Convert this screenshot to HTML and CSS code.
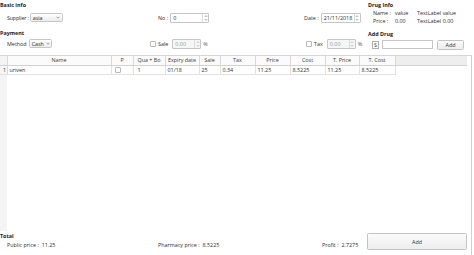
FILE: index.html
```html
<!DOCTYPE html>
<html>
<head>
<meta charset="utf-8">
<link rel="stylesheet" href="styles.css">
</head>
<body>
<div class="top">
  <div class="left">
    <div class="title">Basic info</div>
    <div class="frow r1">
      <div class="fcell c1">
        <span class="lbl tight">Supplier :</span>
        <div class="combo w-sup"><span>asia</span><svg class="chev" width="4" height="3" viewBox="0 0 4 3"><path d="M0.5 0.7 L2 2.2 L3.5 0.7" fill="none" stroke="#666" stroke-width="0.6"/></svg></div>
      </div>
      <div class="fcell c2 off8">
        <span class="lbl">No :</span>
        <div class="spin w-no"><span class="val">0</span><span class="arrows"><svg width="4" height="8" viewBox="0 0 4 8"><path d="M0.8 3 L2 1.6 L3.2 3" fill="none" stroke="#777" stroke-width="0.6"/><path d="M0.8 5 L2 6.4 L3.2 5" fill="none" stroke="#777" stroke-width="0.6"/></svg></span></div>
      </div>
      <div class="fcell c3">
        <span class="lbl">Date :</span>
        <div class="spin w-date"><span class="val">21/11/2018</span><span class="arrows"><svg width="4" height="8" viewBox="0 0 4 8"><path d="M0.8 3 L2 1.6 L3.2 3" fill="none" stroke="#777" stroke-width="0.6"/><path d="M0.8 5 L2 6.4 L3.2 5" fill="none" stroke="#777" stroke-width="0.6"/></svg></span></div>
      </div>
    </div>
    <div class="title t2">Payment</div>
    <div class="frow r2">
      <div class="fcell c1">
        <span class="lbl">Method</span>
        <div class="combo w-cash"><span>Cash</span><svg class="chev" width="4" height="3" viewBox="0 0 4 3"><path d="M0.5 0.7 L2 2.2 L3.5 0.7" fill="none" stroke="#666" stroke-width="0.6"/></svg></div>
      </div>
      <div class="fcell c2">
        <span class="cb"></span><span class="lbl">Sale</span>
        <div class="spin dis w-pct"><span class="val">0.00</span><span class="arrows"><svg width="4" height="8" viewBox="0 0 4 8"><path d="M0.8 3 L2 1.6 L3.2 3" fill="none" stroke="#aaa" stroke-width="0.6"/><path d="M0.8 5 L2 6.4 L3.2 5" fill="none" stroke="#aaa" stroke-width="0.6"/></svg></span></div>
        <span class="pct">%</span>
      </div>
      <div class="fcell c3 off2">
        <span class="cb"></span><span class="lbl">Tax</span>
        <div class="spin dis w-pct"><span class="val">0.00</span><span class="arrows"><svg width="4" height="8" viewBox="0 0 4 8"><path d="M0.8 3 L2 1.6 L3.2 3" fill="none" stroke="#aaa" stroke-width="0.6"/><path d="M0.8 5 L2 6.4 L3.2 5" fill="none" stroke="#aaa" stroke-width="0.6"/></svg></span></div>
        <span class="pct">%</span>
      </div>
    </div>
  </div>
  <div class="right">
    <div class="title rt">Drug Info</div>
    <div class="info">
      <span>Name :</span><span>value</span><span>TextLabel value</span>
      <span>Price :</span><span>0.00</span><span>TextLabel 0.00</span>
    </div>
    <div class="title rt2">Add Drug</div>
    <div class="addrow">
      <div class="sbox">S</div>
      <div class="edit"></div>
      <div class="btn small">Add</div>
    </div>
  </div>
</div>
<div class="main">
  <div class="grid">
    <table class="tbl">
      <colgroup>
        <col style="width:7px"><col style="width:104px"><col style="width:22px"><col style="width:32px"><col style="width:34px"><col style="width:21px"><col style="width:35px"><col style="width:35px"><col style="width:35px"><col style="width:34px"><col style="width:36px"><col style="width:72px">
      </colgroup>
      <thead>
        <tr>
          <th class="corner"></th><th>Name</th><th>P</th><th>Qua + Bo</th><th>Expiry date</th><th>Sale</th><th>Tax</th><th>Price</th><th>Cost</th><th>T. Price</th><th>T. Cost</th><th class="filler"></th>
        </tr>
      </thead>
      <tbody>
        <tr>
          <td class="vh">1</td><td>uriven</td><td><span class="cb tcb"></span></td><td class="pad4">1</td><td>01/18</td><td>25</td><td>0.34</td><td>11.25</td><td>8.5225</td><td>11.25</td><td>8.5225</td><td class="empty"></td>
        </tr>
      </tbody>
    </table>
    <div class="vstrip"></div>
  </div>
  <div class="footer">
    <div class="fleft">
      <div class="title">Total</div>
      <div class="totals">
        <span>Public price :&nbsp; 11.25</span>
        <span>Pharmacy price :&nbsp; 8.5225</span>
        <span>Profit :&nbsp; 2.7275</span>
      </div>
    </div>
    <div class="btn big">Add</div>
  </div>
</div>
</body>
</html>
```
FILE: styles.css
```css
* { box-sizing: border-box; }
html, body { margin: 0; padding: 0; }
body {
  width: 474px;
  height: 255px;
  overflow: hidden;
  background: #ffffff;
  font-family: "Open Sans", "Noto Sans", sans-serif;
  font-size: 5.4px;
  color: #2e2e2e;
}
.top { display: flex; height: 55px; }
.left { width: 368px; }
.right { width: 106px; }
.title { font-weight: 700; height: 10px; line-height: 10px; color: #222; }
.t2 { margin-top: 5px; }
.frow {
  display: grid;
  grid-template-columns: 143px 154px auto;
  padding-left: 7px;
  height: 11px;
  align-items: center;
}
.r1 { margin-top: 2px; }
.fcell { display: flex; align-items: center; height: 11px; }
.off8 { padding-left: 8px; }
.off2 { padding-left: 2px; }
.lbl { white-space: nowrap; margin-right: 2px; }
.tight { letter-spacing: -0.2px; margin-right: 1px; }
.combo {
  height: 9px;
  border: 1px solid #c6c6c6;
  border-radius: 1.5px;
  background: linear-gradient(#fefefe, #ececec);
  display: flex;
  align-items: center;
  justify-content: space-between;
  padding: 0 2px 0 2px;
}
.w-sup { width: 33px; }
.w-cash { width: 23px; padding-right: 1px; }
.chev { display: block; }
.spin {
  height: 10px;
  border: 1px solid #c6c6c6;
  border-radius: 1px;
  background: #fff;
  display: flex;
  align-items: center;
  justify-content: space-between;
  padding-left: 2px;
}
.spin .arrows {
  width: 6px;
  height: 8px;
  display: flex;
  align-items: center;
  justify-content: center;
  border-left: 1px solid #dcdcdc;
}
.spin.dis { background: #f6f6f6; color: #9a9a9a; }
.w-no { width: 39px; }
.w-date { width: 40px; }
.w-pct { width: 29px; margin-left: 2px; }
.pct { margin-left: 2px; color: #555; }
.cb {
  display: inline-block;
  width: 6px;
  height: 6px;
  border: 1px solid #b8b8b8;
  border-radius: 1px;
  background: #fff;
  margin-right: 2px;
}
.info {
  display: grid;
  grid-template-columns: 22px 22px auto;
  padding-left: 5px;
  line-height: 8px;
  margin-top: -1px;
}
.rt { height: 10px; }
.rt2 { margin-top: 4px; }
.addrow { display: flex; align-items: center; padding-left: 4px; height: 11px; }
.sbox {
  width: 7px; height: 8px;
  border: 1px solid #b0b0b0;
  display: flex; align-items: center; justify-content: center;
  margin-right: 3px;
  background: #fff;
}
.edit { width: 51px; height: 9px; border: 1px solid #c6c6c6; background: #fff; margin-right: 4px; }
.btn {
  border: 1px solid #c2c2c2;
  border-radius: 1.5px;
  background: linear-gradient(#fbfbfb, #ededed);
  display: flex; align-items: center; justify-content: center;
  color: #333;
}
.small { width: 27px; height: 10px; }
.main {
  width: 472px;
  height: 200px;
  border-right: 1px solid #cfcfcf;
  display: flex;
  flex-direction: column;
}
.grid { height: 175px; position: relative; border-top: 1px solid #d6d6d6; }
.tbl {
  border-collapse: collapse;
  table-layout: fixed;
  width: 467px;
}
.tbl th {
  font-weight: 400;
  height: 9px;
  padding: 0;
  background: #fbfbfb;
  border-right: 1px solid #d9d9d9;
  border-bottom: 1px solid #d2d2d2;
  text-align: center;
  white-space: nowrap;
  overflow: hidden;
  color: #3a3a3a;
}
.tbl th.corner { background: #f4f4f4; }
.tbl th.filler { background: #eeeeee; border-right: none; }
.tbl td {
  height: 9px;
  padding: 0 0 0 2px;
  border-right: 1px solid #e2e2e2;
  border-bottom: 1px solid #e2e2e2;
  white-space: nowrap;
  overflow: hidden;
  background: #fff;
}
.tbl td.vh { background: #f6f6f6; padding-left: 3px; border-right: 1px solid #d9d9d9; }
.tbl td.empty { border: none; }
.tbl td.pad4 { padding-left: 4px; }
.tcb { vertical-align: middle; margin-left: 1px; }
.vstrip { width: 7px; height: 156px; background: #f4f4f4; }
.footer { height: 25px; display: flex; }
.fleft { flex: 1; padding-top: 1px; }
.totals {
  display: grid;
  grid-template-columns: 151px 164px auto;
  padding-left: 7px;
  line-height: 8px;
}
.big { width: 100px; height: 17px; margin-top: 3px; margin-right: 4px; }
```
